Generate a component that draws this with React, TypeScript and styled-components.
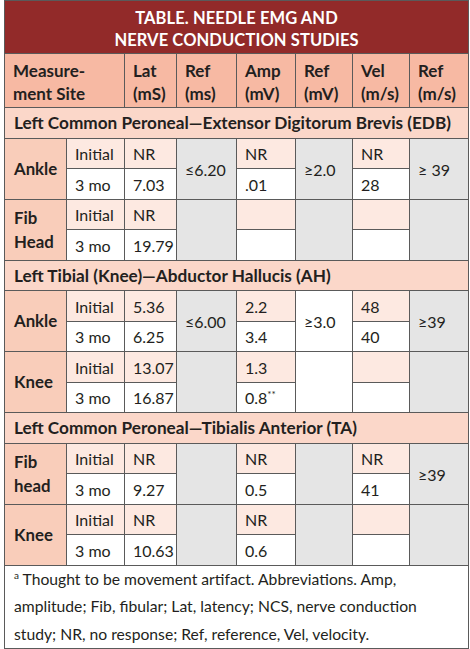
import React from "react";
import styled, { createGlobalStyle } from "styled-components";

const GlobalStyle = createGlobalStyle`
  html, body {
    margin: 0;
    padding: 0;
    background: #ffffff;
  }
  body {
    font-family: Lato, "Open Sans", "Liberation Sans", sans-serif;
    color: #231f20;
  }
`;

type Tone = "salmon" | "section" | "site" | "initial" | "white" | "gray" | "red";

const tones: Record<Tone, string> = {
  red: "#922a29",
  salmon: "#f7b9a3",
  section: "#fbd7c9",
  site: "#f9cdba",
  initial: "#fde9e1",
  white: "#ffffff",
  gray: "#e5e5e5",
};

const Wrap = styled.div`
  padding: 0 0 0 4px;
`;

const Table = styled.table`
  border-collapse: collapse;
  table-layout: fixed;
  width: 464px;
  border: 1px solid #5a5a5a;
`;

const Row = styled.tr<{ $h: number }>`
  height: ${(p) => p.$h}px;
`;

const TitleCell = styled.th`
  background: ${tones.red};
  color: #ffffff;
  font-weight: 700;
  font-size: 16.5px;
  line-height: 22px;
  letter-spacing: 0.1px;
  text-align: center;
  padding: 3px 0 0 0;
  border: 1px solid #5a5a5a;
`;

const HeadCell = styled.th`
  background: ${tones.salmon};
  font-weight: 700;
  font-size: 17px;
  line-height: 23px;
  text-align: left;
  vertical-align: middle;
  padding: 2px 0 0 8px;
  white-space: nowrap;
  border: 1px solid #5a5a5a;
`;

const SectionCell = styled.td`
  background: ${tones.section};
  font-weight: 700;
  font-size: 17.2px;
  text-align: left;
  vertical-align: middle;
  padding: 0 0 0 9px;
  white-space: nowrap;
  border: 1px solid #5a5a5a;
`;

const SiteCell = styled.td`
  background: ${tones.site};
  font-weight: 700;
  font-size: 16.8px;
  line-height: 24px;
  vertical-align: middle;
  padding: 0 0 0 9px;
  border: 1px solid #5a5a5a;
`;

const DataCell = styled.td<{ $tone: Tone }>`
  background: ${(p) => tones[p.$tone]};
  font-weight: 400;
  font-size: 16px;
  vertical-align: middle;
  padding: 1px 0 0 8px;
  white-space: nowrap;
  border: 1px solid #5a5a5a;
`;

const Sup = styled.sup`
  font-size: 10px;
  vertical-align: 6px;
  line-height: 0;
`;

const FootCell = styled.td`
  font-size: 15.7px;
  line-height: 27.5px;
  padding: 0 0 0 9px;
  vertical-align: middle;
  border: 1px solid #5a5a5a;
`;

type RefSpec = { text: string; tone: Tone };
type Site = {
  name: string[];
  lat: [string, string];
  refLat: RefSpec;
  amp: [string, string];
  refAmp: RefSpec;
  vel: [string, string];
  refVel: RefSpec;
};
type Section = { title: string; sites: Site[] };

const gray = (text = ""): RefSpec => ({ text, tone: "gray" });

const sections: Section[] = [
  {
    title: "Left Common Peroneal—Extensor Digitorum Brevis (EDB)",
    sites: [
      {
        name: ["Ankle"],
        lat: ["NR", "7.03"],
        refLat: gray("≤6.20"),
        amp: ["NR", ".01"],
        refAmp: gray("≥2.0"),
        vel: ["NR", "28"],
        refVel: gray("≥ 39"),
      },
      {
        name: ["Fib", "Head"],
        lat: ["NR", "19.79"],
        refLat: gray(),
        amp: ["", ""],
        refAmp: gray(),
        vel: ["", ""],
        refVel: gray(),
      },
    ],
  },
  {
    title: "Left Tibial (Knee)—Abductor Hallucis (AH)",
    sites: [
      {
        name: ["Ankle"],
        lat: ["5.36", "6.25"],
        refLat: gray("≤6.00"),
        amp: ["2.2", "3.4"],
        refAmp: { text: "≥3.0", tone: "white" },
        vel: ["48", "40"],
        refVel: gray("≥39"),
      },
      {
        name: ["Knee"],
        lat: ["13.07", "16.87"],
        refLat: gray(),
        amp: ["1.3", "0.8**"],
        refAmp: { text: "", tone: "white" },
        vel: ["", ""],
        refVel: gray(),
      },
    ],
  },
  {
    title: "Left Common Peroneal—Tibialis Anterior (TA)",
    sites: [
      {
        name: ["Fib", "head"],
        lat: ["NR", "9.27"],
        refLat: gray(),
        amp: ["NR", "0.5"],
        refAmp: gray(),
        vel: ["NR", "41"],
        refVel: gray("≥39"),
      },
      {
        name: ["Knee"],
        lat: ["NR", "10.63"],
        refLat: gray(),
        amp: ["NR", "0.6"],
        refAmp: gray(),
        vel: ["", ""],
        refVel: gray(),
      },
    ],
  },
];

const renderValue = (v: string) => {
  if (v.endsWith("**")) {
    return (
      <>
        {v.slice(0, -2)}
        <Sup>**</Sup>
      </>
    );
  }
  return v;
};

const colWidths = [62, 58, 52, 60, 59, 57, 57, 59];

const SiteRows: React.FC<{ site: Site }> = ({ site }) => (
  <>
    <Row $h={30.5}>
      <SiteCell rowSpan={2}>
        {site.name.map((n, i) => (
          <React.Fragment key={n}>
            {i > 0 && <br />}
            {n}
          </React.Fragment>
        ))}
      </SiteCell>
      <DataCell $tone="initial">Initial</DataCell>
      <DataCell $tone="initial">{renderValue(site.lat[0])}</DataCell>
      <DataCell $tone={site.refLat.tone} rowSpan={2}>
        {site.refLat.text}
      </DataCell>
      <DataCell $tone="initial">{renderValue(site.amp[0])}</DataCell>
      <DataCell $tone={site.refAmp.tone} rowSpan={2}>
        {site.refAmp.text}
      </DataCell>
      <DataCell $tone="initial">{renderValue(site.vel[0])}</DataCell>
      <DataCell $tone={site.refVel.tone} rowSpan={2}>
        {site.refVel.text}
      </DataCell>
    </Row>
    <Row $h={30.5}>
      <DataCell $tone="white">3 mo</DataCell>
      <DataCell $tone="white">{renderValue(site.lat[1])}</DataCell>
      <DataCell $tone="white">{renderValue(site.amp[1])}</DataCell>
      <DataCell $tone="white">{renderValue(site.vel[1])}</DataCell>
    </Row>
  </>
);

const headers: [string, string][] = [
  ["Lat", "(mS)"],
  ["Ref", "(ms)"],
  ["Amp", "(mV)"],
  ["Ref", "(mV)"],
  ["Vel", "(m/s)"],
  ["Ref", "(m/s)"],
];

export default function App() {
  return (
    <Wrap>
      <GlobalStyle />
      <Table>
        <colgroup>
          {colWidths.map((w, i) => (
            <col key={i} style={{ width: w }} />
          ))}
        </colgroup>
        <thead>
          <Row $h={53}>
            <TitleCell colSpan={8}>
              TABLE. NEEDLE EMG AND
              <br />
              NERVE CONDUCTION STUDIES
            </TitleCell>
          </Row>
          <Row $h={54}>
            <HeadCell colSpan={2}>
              Measure-
              <br />
              ment Site
            </HeadCell>
            {headers.map(([a, b], i) => (
              <HeadCell key={i}>
                {a}
                <br />
                {b}
              </HeadCell>
            ))}
          </Row>
        </thead>
        <tbody>
          {sections.map((s) => (
            <React.Fragment key={s.title}>
              <Row $h={30.5}>
                <SectionCell colSpan={8}>{s.title}</SectionCell>
              </Row>
              {s.sites.map((site, i) => (
                <SiteRows key={i} site={site} />
              ))}
            </React.Fragment>
          ))}
          <Row $h={83}>
            <FootCell colSpan={8}>
              <Sup>a</Sup> Thought to be movement artifact. Abbreviations. Amp,
              <br />
              amplitude; Fib, fibular; Lat, latency; NCS, nerve conduction
              <br />
              study; NR, no response; Ref, reference, Vel, velocity.
            </FootCell>
          </Row>
        </tbody>
      </Table>
    </Wrap>
  );
}
